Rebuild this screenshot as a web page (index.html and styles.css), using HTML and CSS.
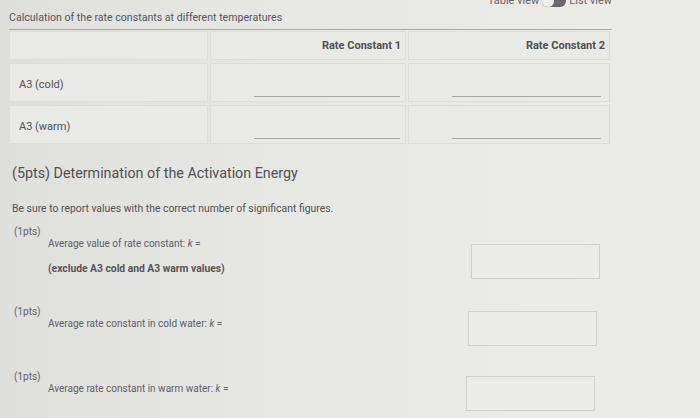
FILE: index.html
```html
<!DOCTYPE html>
<html>
<head>
<meta charset="utf-8">
<link rel="stylesheet" href="styles.css">
</head>
<body>
<div class="page">
  <div class="topbar">
    <span class="view-label">Table view</span>
    <span class="toggle"><span class="knob"></span></span>
    <span class="view-label">List view</span>
  </div>
  <div class="title">Calculation of the rate constants at different temperatures</div>
  <div class="table">
    <div class="cell head"></div>
    <div class="cell head right">Rate Constant 1</div>
    <div class="cell head right">Rate Constant 2</div>
    <div class="cell row label">A3 (cold)</div>
    <div class="cell row"><span class="line l2"></span></div>
    <div class="cell row"><span class="line l3"></span></div>
    <div class="cell row label">A3 (warm)</div>
    <div class="cell row"><span class="line l2"></span></div>
    <div class="cell row"><span class="line l3"></span></div>
  </div>
  <h2 class="section">(5pts) Determination of the Activation Energy</h2>
  <p class="note">Be sure to report values with the correct number of significant figures.</p>
  <div class="question q1">
    <div class="pts">(1pts)</div>
    <div class="qbody">
      <div class="prompt">
        <div>Average value of rate constant: <i>k</i> =</div>
        <div class="bold">(exclude A3 cold and A3 warm values)</div>
      </div>
      <div class="box"></div>
    </div>
  </div>
  <div class="question q2">
    <div class="pts">(1pts)</div>
    <div class="qbody">
      <div class="prompt"><div>Average rate constant in cold water: <i>k</i> =</div></div>
      <div class="box"></div>
    </div>
  </div>
  <div class="question q3">
    <div class="pts">(1pts)</div>
    <div class="qbody">
      <div class="prompt"><div>Average rate constant in warm water: <i>k</i> =</div></div>
      <div class="box"></div>
    </div>
  </div>
</div>
</body>
</html>
```
FILE: styles.css
```css
html, body {
  margin: 0;
  padding: 0;
}
body {
  width: 700px;
  height: 418px;
  overflow: hidden;
  background: linear-gradient(90deg, #dfdfdd 0%, #e7e7e5 40%, #ececea 100%);
  font-family: Roboto, "Liberation Sans", sans-serif;
  color: #55555a;
}
.page {
  padding-left: 9px;
  width: 603px;
}
.topbar {
  display: flex;
  justify-content: flex-end;
  align-items: center;
  gap: 3px;
  height: 14px;
  margin-top: -6px;
  font-size: 11px;
  line-height: 14px;
  color: #66666b;
}
.toggle {
  width: 24px;
  height: 12px;
  border-radius: 6px;
  background: #6a6a6e;
  position: relative;
  display: inline-block;
}
.knob {
  position: absolute;
  left: 0;
  top: 0;
  width: 12px;
  height: 12px;
  border-radius: 50%;
  background: #f0f0ee;
  box-shadow: 0 0 1px #999;
}
.title {
  margin-top: 3px;
  font-size: 10.6px;
  line-height: 14px;
  color: #55555a;
  padding-bottom: 4px;
  border-bottom: 1px solid #a9a9ab;
}
.table {
  display: grid;
  grid-template-columns: 199px 196px 202px;
  grid-template-rows: 29px 39px 39px;
  gap: 3px 2px;
  margin-top: 1px;
}
.cell {
  background: #e9e9e7;
  border: 1px solid #dcdcda;
  box-sizing: border-box;
  position: relative;
  font-size: 11px;
}
.head {
  font-weight: bold;
  color: #505055;
  display: flex;
  align-items: center;
}
.right {
  justify-content: flex-end;
  padding-right: 4px;
}
.label {
  display: flex;
  align-items: center;
  padding-left: 9px;
  padding-top: 4px;
  color: #505055;
}
.line {
  position: absolute;
  bottom: 4px;
  height: 1px;
  background: #a8a8aa;
}
.l2 {
  left: 43px;
  right: 5px;
}
.l3 {
  left: 43px;
  right: 8px;
}
.section {
  margin: 20px 0 0 3px;
  font-size: 14.3px;
  font-weight: normal;
  line-height: 18px;
  color: #505055;
}
.note {
  margin: 21px 0 0 3px;
  font-size: 10.4px;
  line-height: 12px;
  color: #505055;
}
.question {
  font-size: 10px;
  line-height: 12px;
  color: #5a5a5f;
}
.q1 { margin-top: 11px; }
.q2 { margin-top: 27px; }
.q3 { margin-top: 25px; }
.pts {
  margin-left: 5px;
  color: #606066;
}
.qbody {
  display: flex;
  justify-content: space-between;
  align-items: flex-start;
}
.prompt {
  margin-left: 39px;
  font-size: 10px;
  color: #606065;
}
.prompt > div {
  line-height: 12px;
}
.prompt .bold {
  font-weight: bold;
  font-size: 10.3px;
  margin-top: 13px;
  color: #55555a;
}
.q1 .box { margin-top: 6px; margin-right: 12px; }
.q2 .box { margin-top: -7px; margin-right: 15px; }
.q3 .box { margin-top: -7px; margin-right: 17px; }
.box {
  width: 129px;
  height: 35px;
  box-sizing: border-box;
  border: 1px solid #cfcfcd;
  background: #ececea;
}
i {
  font-style: italic;
}
```
